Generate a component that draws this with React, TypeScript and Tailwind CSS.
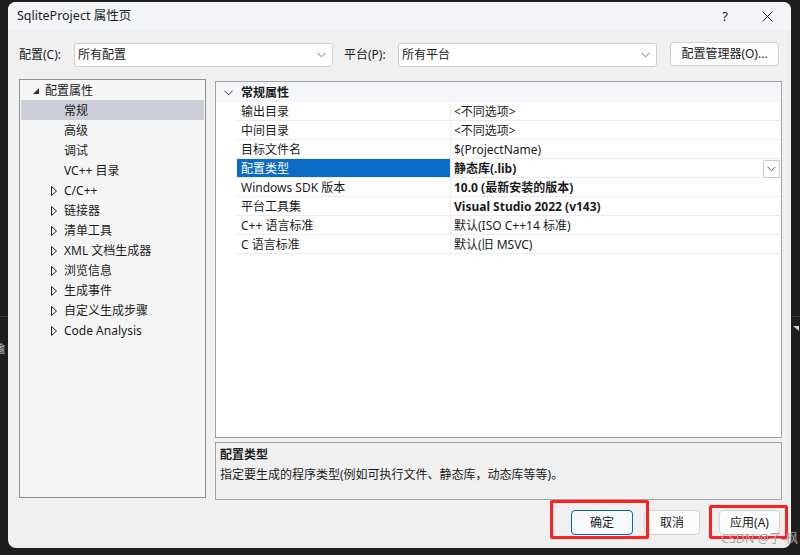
import React from 'react'

const TREE: { label: string; level: 0 | 1; kind: 'open' | 'closed' | 'leaf'; selected?: boolean }[] = [
  { label: '配置属性', level: 0, kind: 'open' },
  { label: '常规', level: 1, kind: 'leaf', selected: true },
  { label: '高级', level: 1, kind: 'leaf' },
  { label: '调试', level: 1, kind: 'leaf' },
  { label: 'VC++ 目录', level: 1, kind: 'leaf' },
  { label: 'C/C++', level: 1, kind: 'closed' },
  { label: '链接器', level: 1, kind: 'closed' },
  { label: '清单工具', level: 1, kind: 'closed' },
  { label: 'XML 文档生成器', level: 1, kind: 'closed' },
  { label: '浏览信息', level: 1, kind: 'closed' },
  { label: '生成事件', level: 1, kind: 'closed' },
  { label: '自定义生成步骤', level: 1, kind: 'closed' },
  { label: 'Code Analysis', level: 1, kind: 'closed' },
]

const PROPS: { name: string; value: string; bold?: boolean; selected?: boolean }[] = [
  { name: '输出目录', value: '<不同选项>' },
  { name: '中间目录', value: '<不同选项>' },
  { name: '目标文件名', value: '$(ProjectName)' },
  { name: '配置类型', value: '静态库(.lib)', bold: true, selected: true },
  { name: 'Windows SDK 版本', value: '10.0 (最新安装的版本)', bold: true },
  { name: '平台工具集', value: 'Visual Studio 2022 (v143)', bold: true },
  { name: 'C++ 语言标准', value: '默认(ISO C++14 标准)' },
  { name: 'C 语言标准', value: '默认(旧 MSVC)' },
]

function Chevron({ className = '' }: { className?: string }) {
  return (
    <svg width="9" height="6" viewBox="0 0 9 6" className={className}>
      <path d="M0.5 0.8 L4.5 4.8 L8.5 0.8" fill="none" stroke="currentColor" strokeWidth="1" />
    </svg>
  )
}

function Select({ text }: { text: string }) {
  return (
    <div className="w-[259px] h-[24px] bg-white border border-[#cfcfcf] rounded-[3px] flex items-center justify-between pl-[3px] pr-[6px]">
      <span>{text}</span>
      <Chevron className="text-[#6b6b6b]" />
    </div>
  )
}

function TreeIcon({ kind }: { kind: 'open' | 'closed' | 'leaf' }) {
  if (kind === 'open')
    return (
      <svg width="6" height="6" viewBox="0 0 6 6">
        <polygon points="6,0 6,6 0,6" fill="#333" />
      </svg>
    )
  if (kind === 'closed')
    return (
      <svg width="6" height="10" viewBox="0 0 6 10">
        <polygon points="0.5,0.5 5.5,5 0.5,9.5" fill="none" stroke="#222" strokeWidth="1" />
      </svg>
    )
  return null
}

export default function App() {
  return (
    <div className="relative w-[800px] h-[555px] overflow-hidden bg-[#1e1e1e] text-[12px] text-[#1b1b1b] font-['Noto_Sans','Noto_Sans_CJK_SC',sans-serif]">
      {/* 背景里露出的编辑器边缘 */}
      <div className="absolute left-0 top-[316px] w-[8px] h-px bg-[#3b3b3b]" />
      <div className="absolute right-0 top-[316px] w-[8px] h-px bg-[#3b3b3b]" />
      <div className="absolute right-[1px] top-[326px] w-0 h-0 border-l-[6px] border-l-transparent border-t-[5px] border-t-[#d0d0d0]" />
      <span className="absolute left-[-6px] top-[343px] text-[11px] leading-none text-[#b9c2cc]">输</span>

      <div className="ml-[8px] mt-[2px] w-[783px] h-[546px] rounded-[8px] bg-[#f0f0f0] flex flex-col overflow-hidden">
        {/* 标题栏 */}
        <div className="h-[28px] bg-[#f3f5f9] flex items-center pl-[9px] text-[12.5px] leading-none">
          <span>SqliteProject 属性页</span>
          <span className="ml-auto mr-[34px] text-[13px]">?</span>
          <svg width="11" height="11" viewBox="0 0 11 11" className="mr-[18px]">
            <path d="M0.5 0.5 L10.5 10.5 M10.5 0.5 L0.5 10.5" stroke="#222" strokeWidth="1" />
          </svg>
        </div>

        {/* 配置 / 平台 */}
        <div className="mt-[13px] h-[24px] flex items-center pl-[11px] leading-none">
          <span className="w-[55px]">配置(C):</span>
          <Select text="所有配置" />
          <span className="ml-[11px] w-[54px]">平台(P):</span>
          <Select text="所有平台" />
          <div className="ml-[13px] -mt-[2px] w-[109px] h-[24px] bg-[#fdfdfd] border border-[#d0d0d0] rounded-[4px] flex items-center justify-center">
            配置管理器(O)...
          </div>
        </div>

        {/* 主区域 */}
        <div className="mt-[12px] flex pl-[11px] leading-none">
          <div className="w-[187px] h-[419px] border border-[#8d9099] bg-[#f5f5f5] flex flex-col">
            {TREE.map((t) => (
              <div
                key={t.label}
                className={`h-[20px] mx-[1px] pt-[1px] flex items-center ${t.selected ? 'bg-[#ccceda]' : ''}`}
              >
                <div className={`flex justify-center ${t.level === 0 ? 'w-[23px] pl-[6px]' : 'w-[43px] pl-[23px]'}`}>
                  <TreeIcon kind={t.kind} />
                </div>
                <span className={t.level === 0 ? 'ml-[1px]' : ''}>{t.label}</span>
              </div>
            ))}
          </div>

          <div className="ml-[9px] w-[567px] flex flex-col">
            {/* 属性表格 */}
            <div className="mt-[2px] h-[357px] border border-[#a2a2a2] bg-white flex flex-col">
              <div className="h-[20px] pt-[1px] bg-[#f4f6fa] flex items-center">
                <Chevron className="ml-[8px] mr-[8px] text-[#333]" />
                <span className="font-bold">常规属性</span>
              </div>
              {PROPS.map((p) => (
                <div key={p.name} className="h-[19px] flex">
                  <div className="w-[21px]" />
                  <div
                    className={`w-[214px] flex items-center pl-[4px] pt-[1px] border-b border-r border-[#ececec] ${
                      p.selected ? 'bg-[#0b6cc6] text-white' : ''
                    }`}
                  >
                    {p.name}
                  </div>
                  <div className={`flex-1 flex items-center pl-[3px] pt-[1px] border-b border-[#ececec] ${p.bold ? 'font-bold' : ''}`}>
                    <span>{p.value}</span>
                    {p.selected && (
                      <div className="ml-auto mr-[1px] w-[17px] h-[18px] bg-white border border-[#c9c9c9] rounded-[2px] flex items-center justify-center">
                        <Chevron className="text-[#555]" />
                      </div>
                    )}
                  </div>
                </div>
              ))}
            </div>

            {/* 说明 */}
            <div className="mt-[4px] h-[58px] border border-[#a2a2a2] bg-[#f0f0f0] pl-[4px] pt-[6px] flex flex-col gap-[8px]">
              <span className="font-bold">配置类型</span>
              <span>指定要生成的程序类型(例如可执行文件、静态库，动态库等等)。</span>
            </div>
          </div>
        </div>

        {/* 按钮 */}
        <div className="mt-[10px] flex leading-none">
          <div className="ml-[563px] w-[62px] h-[25px] rounded-[4px] border border-[#0a63b8] bg-[#f6f9fd] flex items-center justify-center">
            确定
          </div>
          <div className="ml-[11px] w-[56px] h-[25px] rounded-[4px] border border-[#d3d3d3] bg-[#fbfbfb] flex items-center justify-center">
            取消
          </div>
          <div className="ml-[19px] w-[61px] h-[25px] rounded-[4px] border border-[#d3d3d3] bg-[#fbfbfb] flex items-center justify-center">
            应用(A)
          </div>
        </div>
      </div>

      {/* 标注框 */}
      <div className="absolute left-[550px] top-[500px] w-[99px] h-[39px] border-[3px] border-[#ff1f1f] rounded-[2px]" />
      <div className="absolute left-[709px] top-[505px] w-[79px] h-[34px] border-[3px] border-[#ff1f1f] rounded-[2px]" />
      <span className="absolute left-[721px] top-[533px] text-[12.5px] leading-none text-[#a6a6a6]">CSDN @子-枫</span>
    </div>
  )
}
